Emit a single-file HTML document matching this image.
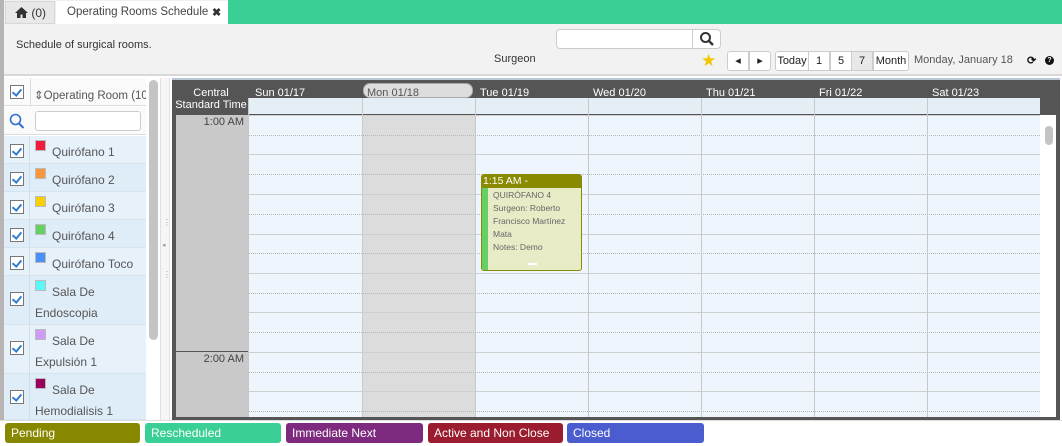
<!DOCTYPE html>
<html><head><meta charset="utf-8"><style>
*{box-sizing:border-box;margin:0;padding:0}
body{width:1062px;height:446px;overflow:hidden;background:#fff;font-family:"Liberation Sans",sans-serif;position:relative;color:#444}
.a{position:absolute}
.cb{position:absolute;width:14px;height:14px;border:1px solid #777;background:#fff}
.cb:after{content:"";position:absolute;left:3px;top:1px;width:4px;height:7px;border:solid #2f7fd0;border-width:0 2px 2px 0;transform:rotate(40deg)}
.row{position:absolute;left:4px;width:142px;border-bottom:1px solid #d6e4ee}
.row .c1{position:absolute;left:0;top:0;bottom:0;width:26px;border-right:1px solid #d0dce6}
.sw{position:absolute;width:11px;height:11px;border:1px solid #bbb}
.lab{position:absolute;font-size:12px;color:#555}
.day{position:absolute;top:87px;font-size:11px;color:#fff}
.leg{position:absolute;top:423px;height:20px;border-radius:3px;color:#fff;font-size:12px;padding:3px 0 0 6px}
.btn{position:absolute;top:51px;height:20px;border:1px solid #ccc;background:#fff;font-size:11px;color:#222;text-align:center;line-height:18px}
.dl{position:absolute;left:249px;width:791px;height:0;border-top:1px dotted #b8b8b8}
.sl{position:absolute;left:249px;width:791px;height:1px;background:#cfcfcf}
</style></head><body>
<div class="a" style="left:0;top:0;width:1062px;height:24px;background:#f0f0f0"></div>
<div class="a" style="left:228px;top:0;width:834px;height:24px;background:#3acf95"></div>
<div class="a" style="left:0;top:0;width:4px;height:446px;background:#b8b4b4"></div>
<div class="a" style="left:5px;top:1px;width:50px;height:23px;background:#e8e8e8;border:1px solid #d8d8d8;font-size:12px;color:#333;padding:4px 0 0 9px;white-space:nowrap">
<svg width="13" height="11" viewBox="0 0 13 11" style="vertical-align:-1px"><path d="M6.5 0L0 6h2v5h3.5V7.5h2V11H11V6h2z" fill="#333"/></svg> (0)</div>
<div class="a" style="left:56px;top:1px;width:172px;height:24px;background:#fff;font-size:11.5px;color:#444;padding:5px 0 0 11px;white-space:nowrap">Operating Rooms Schedule<span style="position:absolute;left:156px;top:5px;color:#333;font-size:11px;font-weight:bold">✖</span></div>
<div class="a" style="left:4px;top:24px;width:1058px;height:52px;background:#f2f2f2;border-bottom:2px solid #d8d8d8"></div>
<div class="a" style="left:16px;top:39px;font-size:11px;color:#333">Schedule of surgical rooms.</div>
<div class="a" style="left:494px;top:53px;font-size:11px;color:#333">Surgeon</div>
<div class="a" style="left:556px;top:29px;width:137px;height:20px;background:#fff;border:1px solid #ccc;border-radius:4px 0 0 4px"></div>
<div class="a" style="left:692px;top:29px;width:29px;height:20px;background:#fff;border:1px solid #ccc;border-radius:0 4px 4px 0">
<svg width="16" height="16" viewBox="0 0 16 16" style="position:absolute;left:6px;top:1px"><circle cx="6.5" cy="6.5" r="4.5" fill="none" stroke="#333" stroke-width="2"/><path d="M10 10l4 4" stroke="#333" stroke-width="2.4"/></svg></div>
<div class="a" style="left:701px;top:51px;font-size:17px;color:#f5c400">★</div>
<div class="btn" style="left:727px;width:22px;border-radius:3px 0 0 3px">◂</div>
<div class="btn" style="left:749px;width:22px;border-radius:0 3px 3px 0">▸</div>
<div class="btn" style="left:775px;width:34px;border-radius:3px 0 0 3px">Today</div>
<div class="btn" style="left:808px;width:22px">1</div>
<div class="btn" style="left:830px;width:22px">5</div>
<div class="btn" style="left:851px;width:22px;background:#e8e8e8">7</div>
<div class="btn" style="left:873px;width:36px;border-radius:0 3px 3px 0">Month</div>
<div class="a" style="left:914px;top:54px;font-size:11px;color:#555">Monday, January 18</div>
<div class="a" style="left:1027px;top:54px;font-size:11px;font-weight:bold;color:#111">⟳</div>
<div class="a" style="left:1045px;top:56px;width:9px;height:9px;border-radius:50%;background:#111;color:#fff;font-size:7px;font-weight:bold;text-align:center;line-height:9px">?</div>
<div class="a" style="left:4px;top:78px;width:156px;height:342px;background:#fff"></div>
<div class="a" style="left:4px;top:78px;width:142px;height:28px;background:#fafafa;border-bottom:1px solid #ddd"></div>
<div class="a" style="left:30px;top:78px;width:1px;height:56px;background:#ddd"></div>
<div class="cb" style="left:10px;top:85px"></div>
<div class="a" style="left:34px;top:88px;font-size:11.5px;color:#555;white-space:nowrap;width:112px;overflow:hidden">⇕Operating Room (10</div>
<div class="a" style="left:4px;top:107px;width:142px;height:28px;background:#fafafa;border-bottom:1px solid #ddd"></div>
<svg class="a" style="left:9px;top:113px" width="16" height="17" viewBox="0 0 16 17"><circle cx="6.5" cy="6.5" r="5" fill="none" stroke="#2f6fd0" stroke-width="1.6"/><path d="M10 10.5l4.5 4.5" stroke="#2f6fd0" stroke-width="2"/></svg>
<div class="a" style="left:35px;top:111px;width:106px;height:20px;border:1px solid #ccc;border-radius:3px;background:#fff"></div>
<div class="row" style="top:136px;height:28px;background:#e6f1fa"><div class="c1"></div></div>
<div class="row" style="top:164px;height:28px;background:#dfedf8"><div class="c1"></div></div>
<div class="row" style="top:192px;height:28px;background:#e6f1fa"><div class="c1"></div></div>
<div class="row" style="top:220px;height:28px;background:#dfedf8"><div class="c1"></div></div>
<div class="row" style="top:248px;height:28px;background:#e6f1fa"><div class="c1"></div></div>
<div class="row" style="top:276px;height:49px;background:#dfedf8"><div class="c1"></div></div>
<div class="row" style="top:325px;height:49px;background:#e6f1fa"><div class="c1"></div></div>
<div class="row" style="top:374px;height:46px;background:#dfedf8"><div class="c1"></div></div>
<div class="cb" style="left:10px;top:144px"></div><div class="sw" style="left:35px;top:140px;background:#f01c3c"></div><div class="lab" style="left:52px;top:145px">Quirófano 1</div>
<div class="cb" style="left:10px;top:172px"></div><div class="sw" style="left:35px;top:168px;background:#f8963c"></div><div class="lab" style="left:52px;top:173px">Quirófano 2</div>
<div class="cb" style="left:10px;top:200px"></div><div class="sw" style="left:35px;top:196px;background:#f8d000"></div><div class="lab" style="left:52px;top:201px">Quirófano 3</div>
<div class="cb" style="left:10px;top:228px"></div><div class="sw" style="left:35px;top:224px;background:#66d066"></div><div class="lab" style="left:52px;top:229px">Quirófano 4</div>
<div class="cb" style="left:10px;top:256px"></div><div class="sw" style="left:35px;top:252px;background:#4a90f8"></div><div class="lab" style="left:52px;top:257px">Quirófano Toco</div>
<div class="cb" style="left:10px;top:292px"></div><div class="sw" style="left:35px;top:280px;background:#5cf8f8"></div><div class="lab" style="left:52px;top:285px">Sala De</div><div class="lab" style="left:35px;top:306px">Endoscopia</div>
<div class="cb" style="left:10px;top:341px"></div><div class="sw" style="left:35px;top:329px;background:#d19af8"></div><div class="lab" style="left:52px;top:334px">Sala De</div><div class="lab" style="left:35px;top:355px">Expulsión 1</div>
<div class="cb" style="left:10px;top:390px"></div><div class="sw" style="left:35px;top:378px;background:#980060"></div><div class="lab" style="left:52px;top:383px">Sala De</div><div class="lab" style="left:35px;top:404px">Hemodialisis 1</div>
<div class="a" style="left:149px;top:80px;width:9px;height:260px;border-radius:5px;background:#c4c4c4"></div>
<div class="a" style="left:160px;top:78px;width:10px;height:342px;background:#f6f6f6;border-left:1px solid #e0e0e0;border-right:1px solid #e0e0e0"></div>
<div class="a" style="left:163px;top:218px;font-size:8px;color:#999">⋮</div>
<div class="a" style="left:162px;top:241px;font-size:7px;color:#999">◂</div>
<div class="a" style="left:163px;top:270px;font-size:8px;color:#999">⋮</div>
<div class="a" style="left:172px;top:78px;width:888px;height:342px;background:#555;border-top:2px solid #b8c8d8"></div>
<div class="a" style="left:175px;top:87px;width:72px;text-align:center;font-size:11px;color:#fff;line-height:12px">Central<br>Standard Time</div>
<div class="a" style="left:248px;top:98px;width:792px;height:16px;background:#e3eef5"></div>
<div class="a" style="left:363px;top:83px;width:110px;height:15px;background:#ddd;border-radius:7px;border:1px solid #aaa"></div>
<div class="day" style="left:255px">Sun 01/17</div>
<div class="day" style="left:367px;color:#555">Mon 01/18</div>
<div class="day" style="left:480px">Tue 01/19</div>
<div class="day" style="left:593px">Wed 01/20</div>
<div class="day" style="left:706px">Thu 01/21</div>
<div class="day" style="left:819px">Fri 01/22</div>
<div class="day" style="left:932px">Sat 01/23</div>
<div class="a" style="left:176px;top:115px;width:72px;height:302px;background:#c9c9c9"></div>
<div class="a" style="left:176px;top:351px;width:72px;height:1px;background:#555"></div>
<div class="a" style="left:176px;top:116px;width:68px;text-align:right;font-size:11px;color:#444">1:00 AM</div>
<div class="a" style="left:176px;top:353px;width:68px;text-align:right;font-size:11px;color:#444">2:00 AM</div>
<div class="a" style="left:248px;top:115px;width:792px;height:302px;background:#eef5fc"></div>
<div class="a" style="left:362px;top:115px;width:113px;height:302px;background:#dcdcdc"></div>
<div class="sl" style="top:115px"></div>
<div class="dl" style="top:135px"></div>
<div class="sl" style="top:154px"></div>
<div class="dl" style="top:174px"></div>
<div class="sl" style="top:194px"></div>
<div class="dl" style="top:214px"></div>
<div class="sl" style="top:234px"></div>
<div class="dl" style="top:253px"></div>
<div class="sl" style="top:273px"></div>
<div class="dl" style="top:293px"></div>
<div class="sl" style="top:312px"></div>
<div class="dl" style="top:332px"></div>
<div class="sl" style="top:352px"></div>
<div class="dl" style="top:372px"></div>
<div class="sl" style="top:391px"></div>
<div class="dl" style="top:411px"></div>
<div class="a" style="left:248px;top:98px;width:1px;height:319px;background:#c8c8c8"></div>
<div class="a" style="left:362px;top:98px;width:1px;height:319px;background:#c8c8c8"></div>
<div class="a" style="left:475px;top:98px;width:1px;height:319px;background:#c8c8c8"></div>
<div class="a" style="left:588px;top:98px;width:1px;height:319px;background:#c8c8c8"></div>
<div class="a" style="left:701px;top:98px;width:1px;height:319px;background:#c8c8c8"></div>
<div class="a" style="left:814px;top:98px;width:1px;height:319px;background:#c8c8c8"></div>
<div class="a" style="left:927px;top:98px;width:1px;height:319px;background:#c8c8c8"></div>
<div class="a" style="left:1040px;top:115px;width:16px;height:302px;background:#fff"></div>
<div class="a" style="left:1045px;top:126px;width:8px;height:19px;border-radius:4px;background:#c4c4c4"></div>
<div class="a" style="left:481px;top:174px;width:101px;height:97px;background:#e8ecc6;border:1px solid #8a8a00;border-radius:3px;overflow:hidden">
<div style="height:13px;background:#8a8a00;color:#fff;font-size:10.5px;line-height:13px;padding-left:1px">1:15 AM -</div>
<div style="position:absolute;left:0;top:13px;width:6px;bottom:0;background:#66d066"></div>
<div style="position:absolute;left:11px;top:14px;font-size:8.5px;color:#666;line-height:13px;white-space:nowrap">QUIRÓFANO 4<br>Surgeon: Roberto<br>Francisco Martínez<br>Mata<br>Notes: Demo</div>
<div style="position:absolute;left:46px;top:88px;width:9px;height:2px;background:#fff"></div>
</div>
<div class="a" style="left:0;top:420px;width:1062px;height:26px;background:#fff;border-top:1px solid #ddd"></div>
<div class="leg" style="left:5px;width:135px;background:#888800">Pending</div>
<div class="leg" style="left:145px;width:136px;background:#3acf95">Rescheduled</div>
<div class="leg" style="left:286px;width:137px;background:#7e2a7e">Immediate Next</div>
<div class="leg" style="left:428px;width:135px;background:#9b1c2e">Active and Non Close</div>
<div class="leg" style="left:567px;width:137px;background:#4a5cce">Closed</div>
</body></html>
